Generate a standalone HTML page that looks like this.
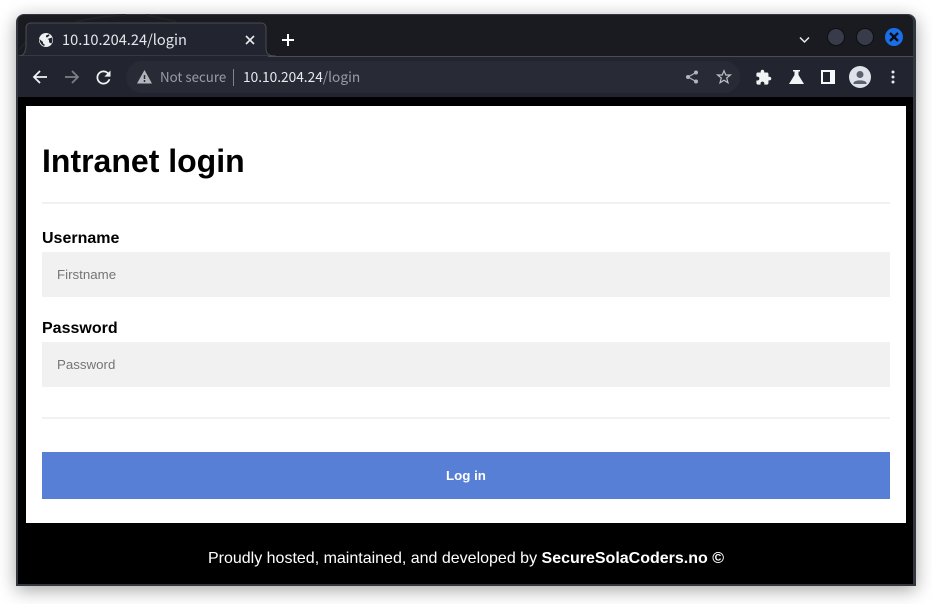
<!DOCTYPE html>
<html><head><meta charset="utf-8"><style>
*{box-sizing:border-box}
html,body{margin:0;padding:0;width:932px;height:604px;overflow:hidden;background:#fff;font-family:"Liberation Sans",sans-serif}
.abs,.abs *{position:absolute}
#win{left:16px;top:14px;width:900px;height:572px;background:#34373f;border-radius:8px 8px 0 0;box-shadow:0 4px 18px rgba(0,0,0,.36)}
#top{left:2px;top:1px;width:895px;height:41px;background:#191b20;border-radius:6px 6px 0 0;overflow:hidden}
#tool{left:2px;top:43px;width:895px;height:40px;background:#222530}
#page{left:2px;top:83px;width:895px;height:487px;background:#000}
#white{left:8px;top:9px;width:880px;height:417px;background:#fff}
.ui{font-family:"Noto Sans CJK JP","DejaVu Sans",sans-serif;white-space:nowrap}
svg{overflow:visible}
</style></head><body class="abs">
<div id="win">
<div id="top"></div>
<div style="left:2px;top:42px;width:895px;height:1px;background:#4a4c54"></div>
<div id="tool"></div>
<div id="page"><div id="white"></div></div>
</div>
<svg style="left:16px;top:14px" width="250" height="42"><path d="M60 8C75 4 90 2 110 1M130 1C140 3 150 5 160 8M3 36C6 32 8 30 10 28" stroke="#202227" stroke-width="2" fill="none"/><path d="M2 42 C8 42 10 38 10 30 L10 14 C10 11 12 9 15 9 L245 9 C248 9 250 11 250 14 L250 34 C250 40 253 42 260 42 Z" fill="#222530" stroke="#494b53"/></svg>
<div style="left:18px;top:56px;width:250px;height:2px;background:#222530"></div>
<svg style="left:38px;top:32px" width="16" height="16" viewBox="0 0 16 16"><circle cx="8" cy="8" r="7" fill="#eef0f3"/><path d="M9.500 7L14 5.500C14.700 7.500 14.500 10 13.200 11.700C12.500 10.800 11.800 10.500 11 10.500V8.500C11 7.800 10.300 7.200 9.500 7ZM1.400 7L5 10V11.500L6.500 12.300V14C4 13.400 1.800 11 1.400 7ZM8 3.500L11 2.200L11.500 3.500L9.500 5.200H8Z" fill="#222530"/></svg>
<div class="ui" style="left:62px;top:30px;font-size:14.600px;line-height:20px;color:#e3e5e9">10.10.204.24/login</div>
<svg style="left:245px;top:35px" width="10" height="10"><path d="M1 1L9 9M9 1L1 9" stroke="#e8eaed" stroke-width="1.600"/></svg>
<svg style="left:282px;top:34px" width="12" height="12"><path d="M6 0V12M0 6H12" stroke="#fff" stroke-width="2"/></svg>
<svg style="left:799px;top:36px" width="11" height="8"><path d="M1 1.500L5.500 6L10 1.500" stroke="#e8eaed" stroke-width="1.500" fill="none"/></svg>
<div style="left:827px;top:28px;width:18px;height:18px;border-radius:50%;background:#383c4a;border:1px solid #0e0f12"></div>
<div style="left:856px;top:28px;width:18px;height:18px;border-radius:50%;background:#383c4a;border:1px solid #0e0f12"></div>
<div style="left:885px;top:28px;width:18px;height:18px;border-radius:50%;background:#1a6fe8"></div>
<svg style="left:889px;top:32px" width="10" height="10"><path d="M1 1L9 9M9 1L1 9" stroke="#0b0d12" stroke-width="2.400"/></svg>

<svg style="left:32px;top:69px" width="16" height="16"><path d="M15 8H2M8 2L2 8L8 14" stroke="#f1f3f4" stroke-width="1.800" fill="none"/></svg>
<svg style="left:64px;top:69px" width="16" height="16"><path d="M1 8H14M8 2L14 8L8 14" stroke="#7d7f86" stroke-width="1.800" fill="none"/></svg>
<svg style="left:93px;top:66.500px" width="21" height="21" viewBox="0 0 24 24"><path fill="#f1f3f4" d="M17.650 6.350C16.200 4.900 14.210 4 12 4c-4.420 0-7.990 3.580-7.990 8s3.570 8 7.990 8c3.730 0 6.840-2.550 7.730-6h-2.080c-.820 2.330-3.040 4-5.650 4-3.310 0-6-2.690-6-6s2.690-6 6-6c1.660 0 3.140.690 4.220 1.780L13 11h7V4l-2.350 2.350z"/></svg>
<div style="left:126px;top:61px;width:614px;height:32px;border-radius:16px;background:#282b36"></div>
<svg style="left:137px;top:70px" width="15" height="14"><path d="M7.500 0L15 13.500H0Z" fill="#b3b5ba"/><path d="M7.500 5V9M7.500 10V12" stroke="#282b36" stroke-width="1.500"/></svg>
<div class="ui" style="left:160px;top:67px;font-size:13.300px;line-height:20px;color:#9a9da4">Not secure</div>
<div style="left:233px;top:69px;width:1px;height:17px;background:#80838a"></div>
<div class="ui" style="left:243px;top:66px;font-size:13.700px;line-height:20px;color:#e8eaed">10.10.204.24<span style="position:static;color:#9a9da4">/login</span></div>
<svg style="left:685px;top:70px" width="14" height="14" viewBox="0 0 14 14"><path d="M11 2.500L3 7L11 11.500" stroke="#b3b5ba" stroke-width="1.200" fill="none"/><circle cx="11" cy="2.500" r="2" fill="#b3b5ba"/><circle cx="3" cy="7" r="2" fill="#b3b5ba"/><circle cx="11" cy="11.500" r="2" fill="#b3b5ba"/></svg>
<svg style="left:717px;top:70px" width="14" height="14" viewBox="0 0 14 14"><path d="M7 .8L8.800 5H13.400L9.700 8L11 12.800L7 10.200L3 12.800L4.300 8L.6 5H5.200Z" stroke="#bdbfc4" stroke-width="1.200" fill="none"/></svg>
<svg style="left:755px;top:68.500px" width="17" height="17" viewBox="0 0 24 24"><path fill="#f1f3f4" d="M20.500 11H19V7c0-1.100-.9-2-2-2h-4V3.500C13 2.120 11.880 1 10.500 1S8 2.120 8 3.500V5H4c-1.100 0-1.990.9-1.990 2v3.800H3.500c1.490 0 2.700 1.210 2.700 2.700s-1.210 2.700-2.700 2.700H2V20c0 1.100.9 2 2 2h3.800v-1.500c0-1.490 1.210-2.700 2.700-2.700 1.490 0 2.700 1.210 2.700 2.700V22H17c1.100 0 2-.9 2-2v-4h1.500c1.380 0 2.500-1.120 2.500-2.500S21.880 11 20.500 11z"/></svg>
<svg style="left:788.500px;top:70px" width="15" height="14"><path d="M4 0H11V1.500H9.500V5L15 14H0L5.500 5V1.500H4Z" fill="#f1f3f4"/></svg>
<svg style="left:821px;top:70px" width="14" height="14"><path d="M0 0H14V14H0ZM2 2V12H9V2Z" fill="#f8f9fa" fill-rule="evenodd"/></svg>
<svg style="left:849px;top:66px" width="22" height="22" viewBox="0 0 22 22"><circle cx="11" cy="11" r="11" fill="#dfe2e8"/><circle cx="11" cy="8.500" r="3.500" fill="#5b6270"/><path d="M4.500 17C5 13.500 17 13.500 17.500 17V18H4.500Z" fill="#5b6270"/></svg>
<svg style="left:889.700px;top:70px" width="6" height="14"><circle cx="3" cy="2" r="1.500" fill="#e8eaed"/><circle cx="3" cy="7" r="1.500" fill="#e8eaed"/><circle cx="3" cy="12" r="1.500" fill="#e8eaed"/></svg>

<div style="left:42px;top:142px;font-size:32px;line-height:38px;font-weight:700;color:#000;white-space:nowrap">Intranet login</div>
<div style="left:42px;top:202px;width:848px;height:2px;background:#f1f1f1"></div>
<div style="left:42px;top:229px;font-size:16px;line-height:19px;font-weight:700;color:#000">Username</div>
<div style="left:42px;top:252px;width:848px;height:45px;background:#f1f1f1"></div>
<div style="left:57px;top:267px;font-size:13.300px;line-height:15px;color:#757575">Firstname</div>
<div style="left:42px;top:319px;font-size:16px;line-height:19px;font-weight:700;color:#000">Password</div>
<div style="left:42px;top:342px;width:848px;height:45px;background:#f1f1f1"></div>
<div style="left:57px;top:357px;font-size:13.300px;line-height:15px;color:#757575">Password</div>
<div style="left:42px;top:417px;width:848px;height:2px;background:#f1f1f1"></div>
<div style="left:42px;top:452px;width:848px;height:47px;background:#577fd6"></div>
<div style="left:42px;top:468px;width:848px;text-align:center;font-size:13.300px;line-height:15px;font-weight:700;color:#fff">Log in</div>
<div style="left:26px;top:549px;width:880px;text-align:center;font-size:16px;line-height:19px;color:#fff;white-space:nowrap">Proudly hosted, maintained, and developed by <b style="position:static">SecureSolaCoders.no ©</b></div>
</body></html>
